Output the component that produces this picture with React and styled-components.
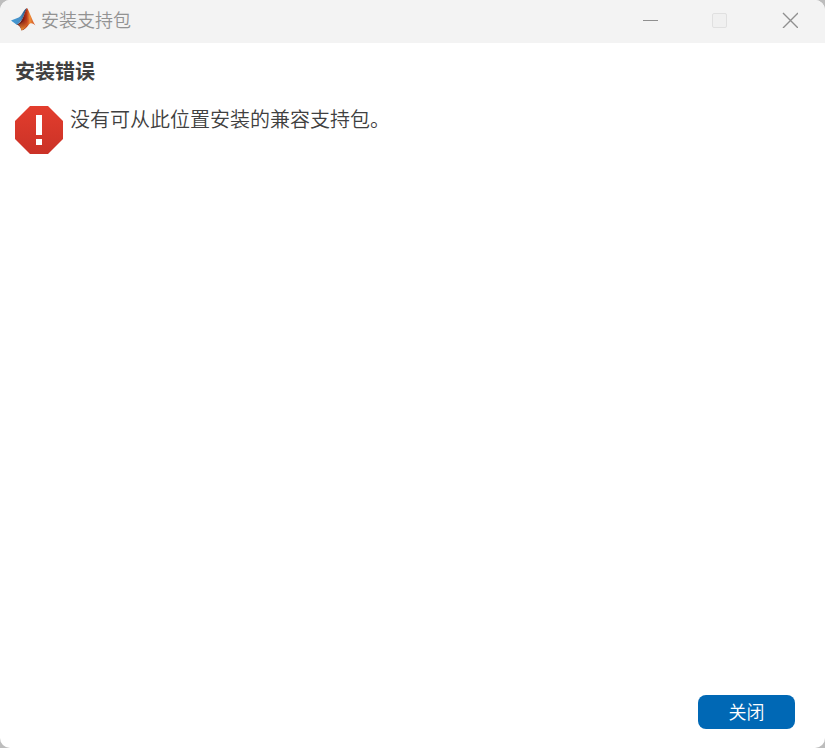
import React from "react";
import styled, { createGlobalStyle } from "styled-components";

const GlobalStyle = createGlobalStyle`
  *, *::before, *::after { box-sizing: border-box; }
  body {
    margin: 0;
    background: #bdbdbd;
    font-family: "Noto Sans CJK SC", sans-serif;
    color: #404040;
  }
`;

const Window = styled.div`
  display: flex;
  flex-direction: column;
  min-height: 100vh;
  overflow: hidden;
  border-radius: 10px;
  background: #ffffff;
`;

const TitleBar = styled.header`
  display: flex;
  align-items: center;
  justify-content: space-between;
  height: 43px;
  padding-left: 11px;
  background: #f3f3f3;
`;

const TitleGroup = styled.div`
  display: flex;
  align-items: center;
  gap: 5px;
  padding-bottom: 5px;
`;

const TitleText = styled.span`
  font-size: 18px;
  font-weight: 350;
  line-height: 24px;
  color: #929292;
`;

const WindowControls = styled.div`
  display: flex;
  align-self: stretch;
`;

const ControlButton = styled.button`
  display: flex;
  align-items: center;
  justify-content: center;
  width: 70px;
  padding: 0 0 3px;
  border: 0;
  background: transparent;
  color: ${({ disabled }) => (disabled ? "#e0e0e0" : "#8f8f8f")};
`;

const Content = styled.main`
  flex: 1;
  padding: 14px 15px;
`;

const Heading = styled.h1`
  margin: 0;
  font-size: 20px;
  font-weight: 700;
  line-height: 28px;
`;

const ErrorRow = styled.div`
  display: flex;
  align-items: flex-start;
  gap: 7px;
  margin-top: 21px;
`;

const Message = styled.p`
  margin: 0;
  font-size: 20px;
  font-weight: 350;
  line-height: 26px;
`;

const Footer = styled.footer`
  display: flex;
  justify-content: flex-end;
  padding: 0 30px 19px;
`;

const PrimaryButton = styled.button`
  min-width: 97px;
  height: 34px;
  padding: 0 16px 2px;
  border: 0;
  border-radius: 8px;
  background: #0068b5;
  color: #ffffff;
  font-family: inherit;
  font-size: 18px;
  font-weight: 350;
  line-height: 32px;
`;

function MatlabLogo() {
  return (
    <svg width="25" height="24" viewBox="0 0 25 24" aria-hidden="true">
      <defs>
        <linearGradient id="wing" x1="0" y1="0" x2="1" y2="0">
          <stop offset="0" stopColor="#3f9ad6" />
          <stop offset="0.6" stopColor="#4a8fc4" />
          <stop offset="1" stopColor="#27456e" />
        </linearGradient>
        <linearGradient id="peak" x1="0" y1="0" x2="1" y2="0">
          <stop offset="0" stopColor="#4a1a22" />
          <stop offset="0.35" stopColor="#7d1c14" />
          <stop offset="0.52" stopColor="#b83419" />
          <stop offset="0.7" stopColor="#f0903a" />
          <stop offset="1" stopColor="#c9401c" />
        </linearGradient>
        <linearGradient id="flame" x1="0" y1="0" x2="0" y2="1">
          <stop offset="0" stopColor="#b9371b" stopOpacity="0" />
          <stop offset="1" stopColor="#f59a35" />
        </linearGradient>
      </defs>
      <path d="M0 13.6 L6.4 11 C8.2 10.8 9.4 9.4 10.6 7.6 C12.4 4.6 13.8 2 16 1 L11 13 L6 18 Z" fill="url(#wing)" />
      <path d="M16 1 C18 3 20.4 11.8 24.4 18.6 C21.4 15.8 19.4 15.6 17.4 18.2 C15.4 20.6 13.4 22.8 10.6 23.4 C9.8 20.6 8.4 18.2 6 17.4 C8.6 16.8 10.2 14.6 11.6 11.6 C13.2 8.2 14 4 16 1 Z" fill="url(#peak)" />
      <path d="M15 10 L18 12 C18.2 16 15 21.8 10.6 23.4 C9.8 20.6 8.4 18.2 7 17.6 C10 17 12.6 14 15 10 Z" fill="url(#flame)" />
    </svg>
  );
}

function ErrorIcon() {
  return (
    <svg width="48" height="48" viewBox="0 0 48 48" role="img" aria-label="错误">
      <defs>
        <linearGradient id="sign" x1="0" y1="0" x2="0" y2="1">
          <stop offset="0" stopColor="#e33d2d" />
          <stop offset="1" stopColor="#cb3227" />
        </linearGradient>
      </defs>
      <path d="M15 0H33L48 15V33L33 48H15L0 33V15Z" fill="url(#sign)" />
      <path d="M21 9H27V29H21ZM21 33H27V39H21Z" fill="#ffffff" />
    </svg>
  );
}

export default function App() {
  return (
    <>
      <GlobalStyle />
      <Window>
        <TitleBar>
          <TitleGroup>
            <MatlabLogo />
            <TitleText>安装支持包</TitleText>
          </TitleGroup>
          <WindowControls>
            <ControlButton type="button" aria-label="最小化">
              <svg width="16" height="16" viewBox="0 0 16 16" stroke="currentColor">
                <path d="M1 8.5H16" />
              </svg>
            </ControlButton>
            <ControlButton type="button" aria-label="最大化" disabled>
              <svg width="16" height="16" viewBox="0 0 16 16" fill="#f0f0f0" stroke="currentColor">
                <rect x="0.5" y="1.5" width="14" height="14" rx="1.5" />
              </svg>
            </ControlButton>
            <ControlButton type="button" aria-label="关闭窗口">
              <svg width="16" height="16" viewBox="0 0 16 16" stroke="currentColor" strokeWidth="1.4">
                <path d="M1 1L16 16M16 1L1 16" />
              </svg>
            </ControlButton>
          </WindowControls>
        </TitleBar>
        <Content>
          <Heading>安装错误</Heading>
          <ErrorRow>
            <ErrorIcon />
            <Message>没有可从此位置安装的兼容支持包。</Message>
          </ErrorRow>
        </Content>
        <Footer>
          <PrimaryButton type="button">关闭</PrimaryButton>
        </Footer>
      </Window>
    </>
  );
}
